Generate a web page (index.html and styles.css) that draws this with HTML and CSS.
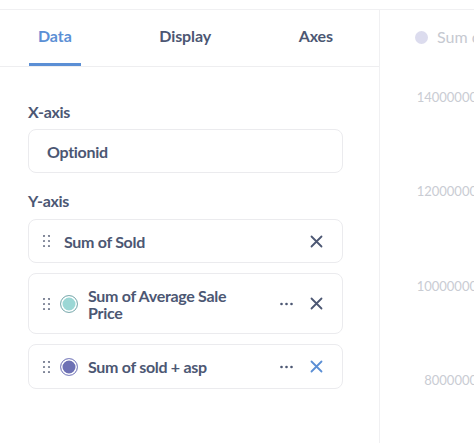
FILE: index.html
```html
<!DOCTYPE html>
<html lang="en">
<head>
<meta charset="utf-8">
<title>Chart settings</title>
<link rel="stylesheet" href="styles.css">
</head>
<body>
<div class="app">
  <div class="main">
    <aside class="sidebar">
      <nav class="tabs">
        <div class="tab active">Data</div>
        <div class="tab">Display</div>
        <div class="tab">Axes</div>
      </nav>
      <div class="content">
        <div class="label">X-axis</div>
        <div class="field">Optionid</div>
        <div class="label label-y">Y-axis</div>
        <div class="series-list">
          <div class="series">
            <svg class="handle" width="7" height="12" viewBox="0 0 7 12"><circle cx="1" cy="1" r="1.1"/><circle cx="6" cy="1" r="1.1"/><circle cx="1" cy="6" r="1.1"/><circle cx="6" cy="6" r="1.1"/><circle cx="1" cy="11" r="1.1"/><circle cx="6" cy="11" r="1.1"/></svg>
            <span class="name name-plain">Sum of Sold</span>
            <svg class="icon-x" width="13" height="13" viewBox="0 0 13 13"><path d="M1.5 1.5L11.5 11.5M11.5 1.5L1.5 11.5"/></svg>
          </div>
          <div class="series">
            <svg class="handle" width="7" height="12" viewBox="0 0 7 12"><circle cx="1" cy="1" r="1.1"/><circle cx="6" cy="1" r="1.1"/><circle cx="1" cy="6" r="1.1"/><circle cx="6" cy="6" r="1.1"/><circle cx="1" cy="11" r="1.1"/><circle cx="6" cy="11" r="1.1"/></svg>
            <span class="swatch swatch-teal"></span>
            <span class="name">Sum of Average Sale Price</span>
            <svg class="icon-dots" width="13" height="4" viewBox="0 0 13 4"><circle cx="1.5" cy="2" r="1.3"/><circle cx="6.5" cy="2" r="1.3"/><circle cx="11.5" cy="2" r="1.3"/></svg>
            <svg class="icon-x" width="13" height="13" viewBox="0 0 13 13"><path d="M1.5 1.5L11.5 11.5M11.5 1.5L1.5 11.5"/></svg>
          </div>
          <div class="series">
            <svg class="handle" width="7" height="12" viewBox="0 0 7 12"><circle cx="1" cy="1" r="1.1"/><circle cx="6" cy="1" r="1.1"/><circle cx="1" cy="6" r="1.1"/><circle cx="6" cy="6" r="1.1"/><circle cx="1" cy="11" r="1.1"/><circle cx="6" cy="11" r="1.1"/></svg>
            <span class="swatch swatch-purple"></span>
            <span class="name">Sum of sold + asp</span>
            <svg class="icon-dots" width="13" height="4" viewBox="0 0 13 4"><circle cx="1.5" cy="2" r="1.3"/><circle cx="6.5" cy="2" r="1.3"/><circle cx="11.5" cy="2" r="1.3"/></svg>
            <svg class="icon-x icon-x-blue" width="13" height="13" viewBox="0 0 13 13"><path d="M1.5 1.5L11.5 11.5M11.5 1.5L1.5 11.5"/></svg>
          </div>
        </div>
      </div>
    </aside>
    <section class="chart">
      <div class="legend"><span class="legend-dot"></span><span class="legend-text">Sum of Sold</span></div>
      <div class="axis">
        <div class="tick tick-first">14000000</div>
        <div class="tick">12000000</div>
        <div class="tick">10000000</div>
        <div class="tick">8000000</div>
      </div>
    </section>
  </div>
</div>
</body>
</html>
```

FILE: styles.css
```css
* { box-sizing: border-box; }

html, body {
  margin: 0;
  padding: 0;
  background: #fff;
}

body {
  font-family: Lato, "Open Sans", "DejaVu Sans", sans-serif;
  color: #4c5773;
  width: 474px;
  height: 443px;
  overflow: hidden;
}

.app {
  padding-top: 9px;
  height: 443px;
}

.main {
  display: flex;
  border-top: 1px solid #f0f0f2;
  height: 434px;
}

.sidebar {
  width: 380px;
  flex: none;
  border-right: 1px solid #f0f0f2;
}

.tabs {
  display: flex;
  justify-content: space-between;
  height: 57px;
  padding: 0 37px 6px 29px;
  border-bottom: 1px solid #eeeef0;
}

.tab {
  position: relative;
  display: flex;
  align-items: center;
  padding: 0 9px;
  font-size: 16px;
  font-weight: 700;
  letter-spacing: -0.1px;
  color: #4c5773;
}

.tab.active {
  color: #5b8fd5;
}

.tab.active::after {
  content: "";
  position: absolute;
  left: 0;
  right: 0;
  bottom: -6px;
  height: 3px;
  background: #5b8fd5;
}

.content {
  padding: 35px 36px 0 28px;
}

.label {
  font-size: 16px;
  font-weight: 700;
  letter-spacing: -0.3px;
  line-height: 20px;
  margin-bottom: 7px;
}

.label-y {
  margin-top: 18px;
  margin-bottom: 8px;
}

.field {
  border: 1px solid #ebebee;
  border-radius: 8px;
  padding: 12.5px 18px;
  font-size: 16px;
  font-weight: 700;
  letter-spacing: -0.3px;
  line-height: 17px;
}

.series-list {
  display: flex;
  flex-direction: column;
  gap: 10px;
}

.series {
  display: flex;
  align-items: center;
  border: 1px solid #ebebee;
  border-radius: 8px;
  padding: 12.5px 19px 12.5px 14px;
  font-size: 16px;
  font-weight: 700;
  letter-spacing: -0.3px;
  line-height: 17px;
}

.handle {
  flex: none;
  fill: #767d90;
  margin-right: 10px;
}

.swatch {
  flex: none;
  width: 18px;
  height: 18px;
  border-radius: 50%;
  margin-right: 10px;
  box-shadow: inset 0 0 0 1.5px #fff;
}

.swatch-teal {
  background: #9bd7d5;
  border: 1px solid #86aeb2;
}

.swatch-purple {
  background: #6d70b4;
  border: 1px solid #8a8dc5;
}

.name {
  flex: 1;
  margin-right: 30px;
}

.name-plain {
  margin-left: 4px;
}

.icon-dots {
  flex: none;
  fill: #4c5773;
  margin-right: 17px;
}

.icon-x {
  flex: none;
  stroke: #4c5773;
  stroke-width: 1.8;
  stroke-linecap: round;
  fill: none;
}

.icon-x-blue {
  stroke: #5b8fd5;
}

.chart {
  flex: 1;
  overflow: hidden;
  display: flex;
  flex-direction: column;
  align-items: flex-start;
}

.legend {
  display: flex;
  align-items: center;
  margin-top: 17px;
  padding-left: 35px;
  height: 20px;
  white-space: nowrap;
}

.legend-dot {
  flex: none;
  width: 13px;
  height: 13px;
  border-radius: 50%;
  background: #dcdcee;
  margin-right: 9px;
}

.legend-text {
  font-size: 16px;
  color: #c6c9d1;
  line-height: 20px;
}

.axis {
  width: 97px;
  flex: none;
  margin-top: 40px;
}

.tick {
  font-size: 13px;
  line-height: 20px;
  color: #c9ccd3;
  text-align: right;
  margin-top: 74.3px;
  white-space: nowrap;
}

.tick-first {
  margin-top: 0;
}
```
